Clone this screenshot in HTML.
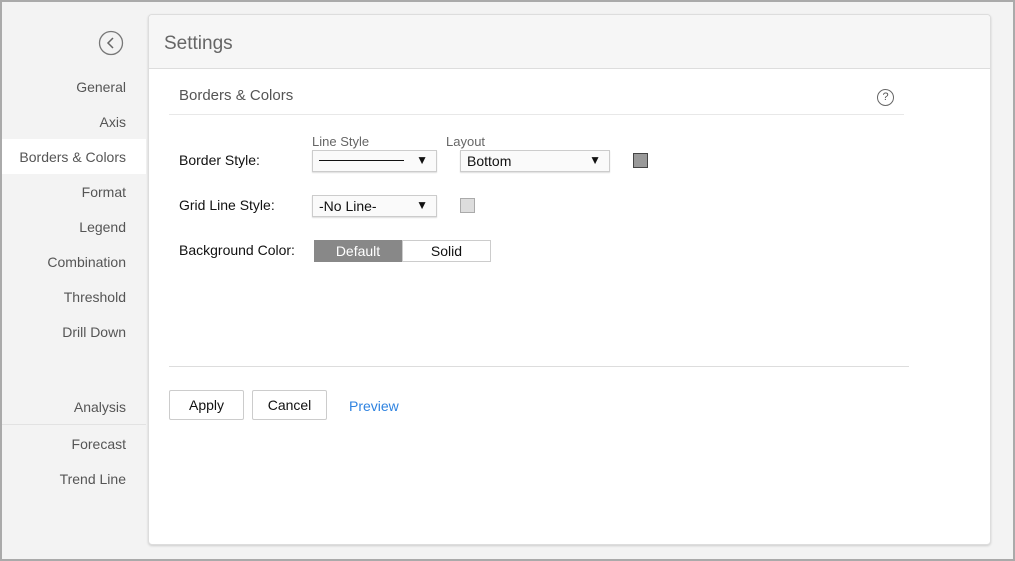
<!DOCTYPE html>
<html><head><style>
*{box-sizing:border-box;margin:0;padding:0}
body{width:1015px;height:561px;background:#f3f3f3;font-family:"Liberation Sans",sans-serif;position:relative;overflow:hidden}
.a{position:absolute}
.nav{right:889px;text-align:right;font-size:14px;color:#555;white-space:nowrap}
.sel{position:absolute;height:22px;border:1px solid #ccc;background:#fafafa;box-shadow:0 1px 1px #ddd;font-size:14px;color:#111;padding:2px 6px}
.sel i{position:absolute;right:8px;top:2px;font-style:normal;font-size:12px}
.lbl{font-size:14px;color:#111}
.btn{position:absolute;height:30px;border:1px solid #ccc;border-radius:2px;background:#fff;font-size:14px;text-align:center;line-height:28px;color:#111}
</style></head><body>
<div class="a" style="left:0;top:139px;width:146px;height:35px;background:#fff"></div>
<div class="a" style="left:0;top:424px;width:146px;height:1px;background:#e2e2e2"></div>
<svg class="a" style="left:98px;top:30px" width="26" height="26"><circle cx="13" cy="13" r="11.5" fill="none" stroke="#777" stroke-width="1.3"/><path d="M15 8 L10 13 L15 18" fill="none" stroke="#666" stroke-width="1.5"/></svg>
<div class="a nav" style="top:79px">General</div>
<div class="a nav" style="top:114px">Axis</div>
<div class="a nav" style="top:149px">Borders &amp; Colors</div>
<div class="a nav" style="top:184px">Format</div>
<div class="a nav" style="top:219px">Legend</div>
<div class="a nav" style="top:254px">Combination</div>
<div class="a nav" style="top:289px">Threshold</div>
<div class="a nav" style="top:324px">Drill Down</div>
<div class="a nav" style="top:399px">Analysis</div>
<div class="a nav" style="top:436px">Forecast</div>
<div class="a nav" style="top:471px">Trend Line</div>
<div class="a" style="left:148px;top:14px;width:843px;height:531px;background:#fff;border:1px solid #ddd;border-radius:4px;box-shadow:0 1px 2px #ccc"></div>
<div class="a" style="left:149px;top:15px;width:841px;height:54px;background:#f6f6f6;border-bottom:1px solid #ddd;border-radius:4px 4px 0 0"></div>
<div class="a" style="left:164px;top:33px;font-size:19px;color:#666">Settings</div>
<div class="a" style="left:179px;top:87px;font-size:15px;color:#555">Borders &amp; Colors</div>
<div class="a" style="left:877px;top:89px;width:17px;height:17px;border:1px solid #666;border-radius:50%;font-size:11px;text-align:center;line-height:15px;color:#555">?</div>
<div class="a" style="left:169px;top:114px;width:735px;height:1px;background:#e8e8e8"></div>
<div class="a" style="left:312px;top:134px;font-size:13px;color:#666">Line Style</div>
<div class="a" style="left:446px;top:134px;font-size:13px;color:#666">Layout</div>
<div class="a lbl" style="left:179px;top:152px">Border Style:</div>
<div class="sel" style="left:312px;top:150px;width:125px"><span class="a" style="left:6px;top:9px;width:85px;height:1px;background:#111"></span><i>▼</i></div>
<div class="sel" style="left:460px;top:150px;width:150px">Bottom<i>▼</i></div>
<div class="a" style="left:633px;top:153px;width:15px;height:15px;background:#999;border:1px solid #444"></div>
<div class="a lbl" style="left:179px;top:197px">Grid Line Style:</div>
<div class="sel" style="left:312px;top:195px;width:125px">-No Line-<i>▼</i></div>
<div class="a" style="left:460px;top:198px;width:15px;height:15px;background:#ddd;border:1px solid #aaa"></div>
<div class="a lbl" style="left:179px;top:242px">Background Color:</div>
<div class="a" style="left:314px;top:240px;width:88px;height:22px;background:#888;color:#fff;font-size:14px;text-align:center;line-height:22px">Default</div>
<div class="a" style="left:402px;top:240px;width:89px;height:22px;border:1px solid #ccc;color:#111;font-size:14px;text-align:center;line-height:20px">Solid</div>
<div class="a" style="left:169px;top:366px;width:740px;height:1px;background:#ddd"></div>
<div class="btn" style="left:169px;top:390px;width:75px">Apply</div>
<div class="btn" style="left:252px;top:390px;width:75px">Cancel</div>
<div class="a" style="left:349px;top:398px;font-size:14px;color:#2f83e0">Preview</div>
<div class="a" style="left:0;top:0;width:1015px;height:561px;border:2px solid #aaa"></div>
</body></html>
